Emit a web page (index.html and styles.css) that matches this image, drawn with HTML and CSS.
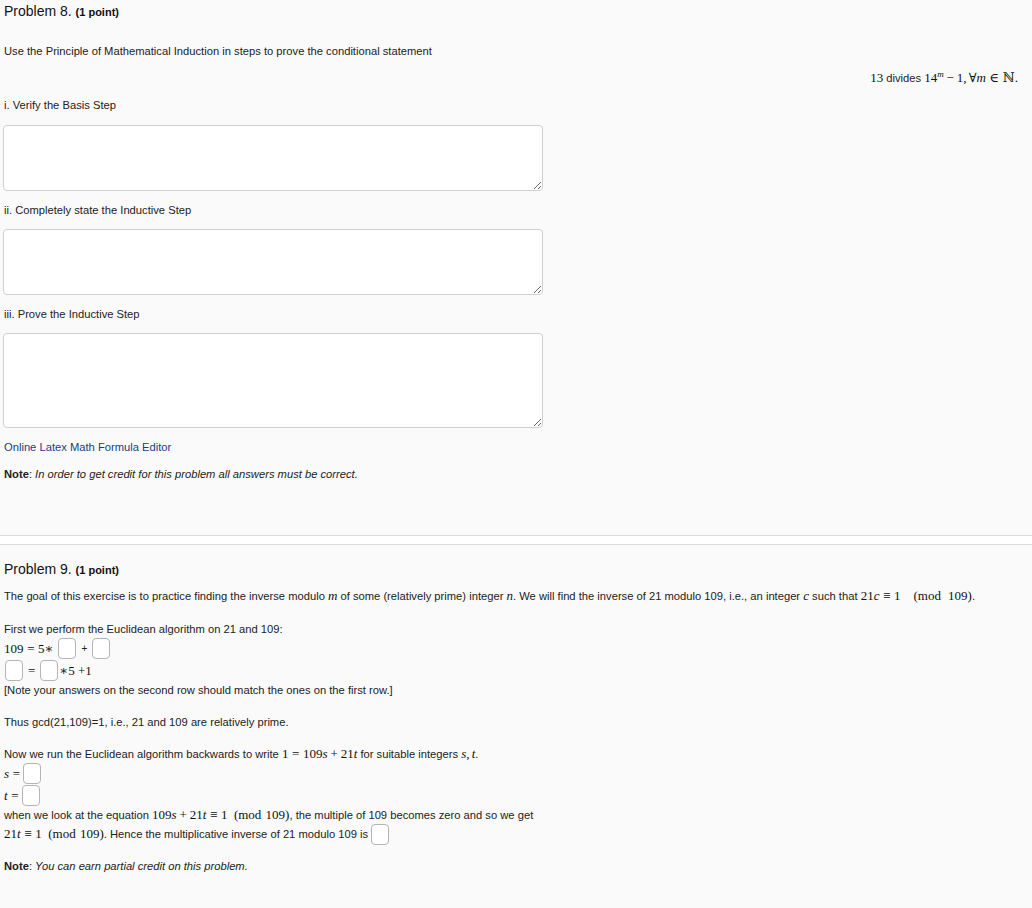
FILE: index.html
```html
<!DOCTYPE html>
<html lang="en">
<head>
  <meta charset="UTF-8" />
  <title>Problems</title>
  <link rel="stylesheet" href="styles.css">
</head>
<body>
  <div class="problem problem-8">
    <h3 class="title">Problem 8. <span class="points">(1 point)</span></h3>

    <p class="intro">Use the Principle of Mathematical Induction in steps to prove the conditional statement</p>
    <p class="display-math"><span class="m">13</span> divides <span class="m">14<sup><i>m</i></sup><span class="bin">&minus;</span>1,<span class="thin"></span>&forall;<i>m</i><span class="rel">&isin;</span>&#8469;.</span></p>

    <p class="step">i. Verify the Basis Step</p>
    <textarea class="answer first"></textarea>

    <p class="step">ii. Completely state the Inductive Step</p>
    <textarea class="answer"></textarea>

    <p class="step">iii. Prove the Inductive Step</p>
    <textarea class="answer tall"></textarea>

    <p class="step"><a href="#" class="link">Online Latex Math Formula Editor</a></p>
    <p class="step"><b>Note</b>: <i>In order to get credit for this problem all answers must be correct.</i></p>
  </div>

  <div class="divider"></div>

  <div class="problem problem-9">
    <h3 class="title">Problem 9. <span class="points">(1 point)</span></h3>

    <p class="goal">The goal of this exercise is to practice finding the inverse modulo <span class="m"><i>m</i></span> of some (relatively prime) integer <span class="m"><i>n</i></span>. We will find the inverse of 21 modulo 109, i.e., an integer <span class="m"><i>c</i></span> such that <span class="m">21<i>c</i><span class="rel">&equiv;</span>1<span class="pmod">(mod<span class="modsp"></span>109)</span></span>.</p>

    <p class="para first-para">First we perform the Euclidean algorithm on 21 and 109:</p>
    <div class="eq-row">
      <span class="m lead">109<span class="rel">=</span>5&lowast;</span><span class="box"></span><span class="plus">+</span><span class="box"></span>
    </div>
    <div class="eq-row">
      <span class="box"></span><span class="m eq">=</span><span class="box"></span><span class="m">&lowast;5 +1</span>
    </div>
    <p class="after-eq">[Note your answers on the second row should match the ones on the first row.]</p>

    <p class="para">Thus gcd(21,109)=1, i.e., 21 and 109 are relatively prime.</p>

    <p class="para">Now we run the Euclidean algorithm backwards to write <span class="m">1<span class="rel">=</span>109<i>s</i><span class="bin">+</span>21<i>t</i></span> for suitable integers <span class="m"><i>s</i>,<span class="thin"></span><i>t</i></span>.</p>
    <div class="eq-row">
      <span class="m lead-var"><i>s</i><span class="rel">=</span></span><span class="box"></span>
    </div>
    <div class="eq-row">
      <span class="m lead-var"><i>t</i><span class="rel">=</span></span><span class="box"></span>
    </div>
    <p class="after-eq">when we look at the equation <span class="m">109<i>s</i><span class="bin">+</span>21<i>t</i><span class="rel">&equiv;</span>1<span class="pmod-s">(mod<span class="modsp-s"></span>109)</span></span>, the multiple of 109 becomes zero and so we get</p>
    <div class="eq-row inline">
      <span class="m">21<i>t</i><span class="rel">&equiv;</span>1<span class="pmod-s">(mod<span class="modsp-s"></span>109)</span></span>. Hence the multiplicative inverse of 21 modulo 109 is <span class="box"></span>
    </div>

    <p class="para last"><b>Note</b>: <i>You can earn partial credit on this problem.</i></p>
  </div>
</body>
</html>
```

FILE: styles.css
```css
* { box-sizing: border-box; }
body {
  margin: 0;
  background: #fff;
  color: #222;
  font-family: "Liberation Sans", Arial, sans-serif;
  font-size: 11.2px;
}

.problem { background: #fafafa; padding: 0 14px 0 4px; }
.problem-8 { padding-top: 2px; padding-bottom: 53px; border-bottom: 1px solid #d9d9d9; }
.problem-9 { padding-top: 15px; padding-bottom: 40px; border-top: 1px solid #d9d9d9; }
.divider { height: 8px; background: #fff; }

p { margin: 0; line-height: 16px; }

.title {
  margin: 0;
  font-size: 14px;
  font-weight: normal;
  line-height: 18px;
  color: #111;
}
.points { font-size: 11px; font-weight: bold; }

.intro { margin-top: 22px; }
.display-math { margin-top: 11px; text-align: right; }
.step { margin-top: 11px; }

/* math bits */
.m {
  font-family: "Liberation Serif", "DejaVu Serif", serif;
  font-size: 13px;
  color: #111;
}
.m sup { font-size: 9px; line-height: 0; }
.rel { margin: 0 0.28em; }
.bin { margin: 0 0.22em; }
.thin { margin-left: 0.17em; }
.pmod { margin-left: 1em; }
.modsp { margin-left: 0.55em; }
.pmod-s { margin-left: 0.5em; }
.modsp-s { margin-left: 0.33em; }

.answer {
  display: block;
  width: 540px;
  height: 66px;
  margin: 11px 0 0 -1px;
  background: #fff;
  border: 1px solid #cfcfcf;
  border-radius: 4px;
  resize: vertical;
}
.answer.first { margin-top: 12px; }
.answer + .step { margin-top: 11px; }
.answer.tall { height: 95px; }

.link { color: #1c3a85; text-decoration: none; }

.goal { margin-top: 9px; }
.para { margin-top: 16px; }
.first-para { margin-top: 17px; }
.para.last { margin-top: 13px; }

.eq-row {
  display: flex;
  align-items: center;
  height: 21px;
  margin-top: 1px;
  white-space: nowrap;
}
.eq-row.inline { margin-top: 0; height: 22px; }

.box {
  display: inline-block;
  width: 18px;
  height: 21px;
  background: #fff;
  border: 1px solid #b5b5b5;
  border-radius: 4px;
  margin: 0 1px;
}
.lead { margin-right: 4px; }
.lead-var .rel { margin-right: 0.15em; }
.plus { margin: 0 4px; font-size: 10px; }
.eq { margin: 0 4px; }
.eq-row.inline .box { margin-left: 3px; }

.after-eq { margin-top: 1px; }
```
